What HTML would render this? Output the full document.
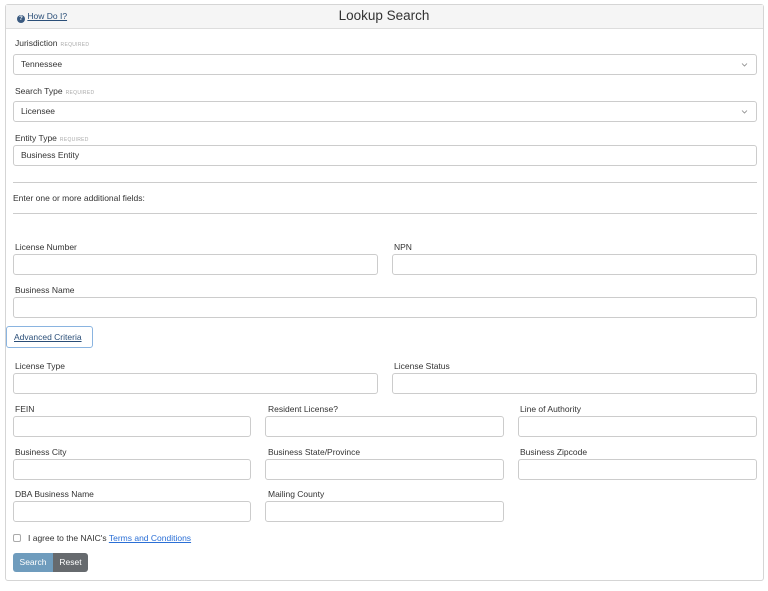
<!DOCTYPE html>
<html><head><style>
*{box-sizing:border-box;margin:0;padding:0}
body{width:768px;height:591px;background:#fff;font-family:"Liberation Sans",sans-serif;color:#333;position:relative;overflow:hidden}
.a{position:absolute}
.panel{left:5px;top:4px;width:759px;height:577px;border:1px solid #d5d5d5;border-radius:3px}
.head{left:6px;top:5px;width:757px;height:24px;background:#f5f5f5;border-bottom:1px solid #ddd}
.lbl{font-size:8.5px;color:#333}
.req{font-size:5px;color:#aaa;letter-spacing:.3px;margin-left:3px}
.in{border:1px solid #ccc;border-radius:3px;background:#fff;height:21px;font-size:8.5px;padding:0 7px;line-height:19px;color:#333}
.hr{height:1px;background:#ccc;left:13px;width:744px}
.chev{position:absolute;right:8px;top:7px}
</style></head><body>
<div class="a panel"></div>
<div class="a head"></div>
<div class="a" style="left:17px;top:11px;font-size:8.5px;color:#2a4e78"><span style="display:inline-block;width:8px;height:8px;border-radius:50%;background:#3a5a80;color:#fff;font-size:6px;text-align:center;line-height:8px;font-weight:bold;vertical-align:-1px">?</span> <span style="text-decoration:underline">How Do I?</span></div>
<div class="a" style="left:0;width:768px;top:8px;text-align:center;font-size:13.5px;color:#333">Lookup Search</div>

<div class="a lbl" style="left:15px;top:38px">Jurisdiction<span class="req">REQUIRED</span></div>
<div class="a in" style="left:13px;top:54px;width:744px">Tennessee<svg class="chev" width="7" height="5" viewBox="0 0 7 5"><path d="M1 1.5L3.5 4L6 1.5" fill="none" stroke="#888" stroke-width="0.8"/></svg></div>
<div class="a lbl" style="left:15px;top:86px">Search Type<span class="req">REQUIRED</span></div>
<div class="a in" style="left:13px;top:101px;width:744px">Licensee<svg class="chev" width="7" height="5" viewBox="0 0 7 5"><path d="M1 1.5L3.5 4L6 1.5" fill="none" stroke="#888" stroke-width="0.8"/></svg></div>
<div class="a lbl" style="left:15px;top:133px">Entity Type<span class="req">REQUIRED</span></div>
<div class="a in" style="left:13px;top:145px;width:744px">Business Entity</div>

<div class="a hr" style="top:182px"></div>
<div class="a lbl" style="left:13px;top:193px">Enter one or more additional fields:</div>
<div class="a hr" style="top:213px"></div>

<div class="a lbl" style="left:15px;top:242px">License Number</div>
<div class="a in" style="left:13px;top:254px;width:365px"></div>
<div class="a lbl" style="left:394px;top:242px">NPN</div>
<div class="a in" style="left:392px;top:254px;width:365px"></div>
<div class="a lbl" style="left:15px;top:285px">Business Name</div>
<div class="a in" style="left:13px;top:297px;width:744px"></div>

<div class="a" style="left:6px;top:326px;width:87px;height:22px;border:1.5px solid #8ab4e0;border-radius:3px;background:#fff;font-size:8.5px;color:#2a4e78;text-decoration:underline;padding:5px 0 0 7px">Advanced Criteria</div>

<div class="a lbl" style="left:15px;top:361px">License Type</div>
<div class="a in" style="left:13px;top:373px;width:365px"></div>
<div class="a lbl" style="left:394px;top:361px">License Status</div>
<div class="a in" style="left:392px;top:373px;width:365px"></div>

<div class="a lbl" style="left:15px;top:404px">FEIN</div>
<div class="a in" style="left:13px;top:416px;width:238px"></div>
<div class="a lbl" style="left:268px;top:404px">Resident License?</div>
<div class="a in" style="left:265px;top:416px;width:239px"></div>
<div class="a lbl" style="left:520px;top:404px">Line of Authority</div>
<div class="a in" style="left:518px;top:416px;width:239px"></div>

<div class="a lbl" style="left:15px;top:447px">Business City</div>
<div class="a in" style="left:13px;top:459px;width:238px"></div>
<div class="a lbl" style="left:268px;top:447px">Business State/Province</div>
<div class="a in" style="left:265px;top:459px;width:239px"></div>
<div class="a lbl" style="left:520px;top:447px">Business Zipcode</div>
<div class="a in" style="left:518px;top:459px;width:239px"></div>

<div class="a lbl" style="left:15px;top:489px">DBA Business Name</div>
<div class="a in" style="left:13px;top:501px;width:238px"></div>
<div class="a lbl" style="left:268px;top:489px">Mailing County</div>
<div class="a in" style="left:265px;top:501px;width:239px"></div>

<div class="a" style="left:13px;top:534px;width:8px;height:8px;border:1px solid #aaa;border-radius:2px"></div>
<div class="a lbl" style="left:28px;top:533px">I agree to the NAIC's <span style="color:#2a6fd6;text-decoration:underline">Terms and Conditions</span></div>

<div class="a" style="left:13px;top:553px;width:40px;height:19px;background:#6f9cbd;border-radius:3px 0 0 3px;color:#fff;font-size:8.5px;text-align:center;line-height:19px">Search</div>
<div class="a" style="left:53px;top:553px;width:35px;height:19px;background:#666a6e;border-radius:0 3px 3px 0;color:#fff;font-size:8.5px;text-align:center;line-height:19px">Reset</div>
</body></html>
